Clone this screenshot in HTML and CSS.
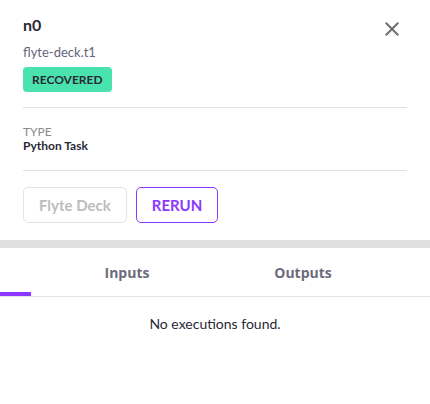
FILE: index.html
```html
<!DOCTYPE html>
<html>
<head>
<meta charset="utf-8">
<link rel="stylesheet" href="styles.css">
</head>
<body>
<div class="panel">
  <div class="header">
    <div class="title-row">
      <div class="titles">
        <div class="title">n0</div>
        <div class="subtitle">flyte-deck.t1</div>
      </div>
      <button class="close" aria-label="close">
        <svg viewBox="0 0 24 24" width="24" height="24"><path d="M19 6.41L17.59 5 12 10.59 6.41 5 5 6.41 10.59 12 5 17.59 6.41 19 12 13.41 17.59 19 19 17.59 13.41 12z" fill="#6e6e6e"/></svg>
      </button>
    </div>
    <div class="badge">RECOVERED</div>
    <div class="divider"></div>
    <div class="meta">
      <div class="meta-label">TYPE</div>
      <div class="meta-value">Python Task</div>
    </div>
    <div class="divider second"></div>
    <div class="actions">
      <button class="btn btn-disabled">Flyte Deck</button>
      <button class="btn btn-primary">RERUN</button>
    </div>
  </div>
  <div class="band"></div>
  <div class="tabs">
    <div class="tab">Inputs</div>
    <div class="tab">Outputs</div>
    <div class="indicator"></div>
  </div>
  <div class="empty">No executions found.</div>
</div>
</body>
</html>
```
FILE: styles.css
```css
* { box-sizing: border-box; }
html, body { margin: 0; padding: 0; background: #fff; }
body { font-family: Lato, "Liberation Sans", sans-serif; color: #292936; width: 430px; height: 404px; overflow: hidden; }
.header { padding: 13px 23px 0 23px; }
.title-row { display: flex; justify-content: space-between; align-items: flex-start; }
.title { font-size: 16px; font-weight: 700; line-height: 24px; color: #292936; }
.subtitle { margin-top: 6px; font-size: 13px; line-height: 18px; color: #636379; }
.close { margin: 4px 3px 0 0; padding: 0; border: 0; background: none; width: 24px; height: 24px; display: block; }
.close svg { display: block; }
.badge { display: inline-block; margin-top: 6px; height: 25px; padding: 0 9px; border-radius: 4px; background: #4ae3ae; color: #292936; font-size: 12px; font-weight: 700; line-height: 25px; }
.divider { height: 1px; background: #e2e2e2; margin-top: 15px; }
.divider.second { margin-top: 16px; }
.meta { margin-top: 18px; }
.meta-label { font-size: 12px; line-height: 12px; color: #8a8a8a; }
.meta-value { font-size: 12px; line-height: 16px; font-weight: 700; color: #292936; }
.actions { display: flex; gap: 9px; margin-top: 16px; }
.btn { height: 36px; padding: 0 15px; border-radius: 5px; background: #fff; font-family: Lato, "Liberation Sans", sans-serif; font-size: 15px; font-weight: 700; line-height: 34px; }
.btn-disabled { border: 1px solid #e4e4e4; color: #bdbdbd; }
.btn-primary { border: 1px solid #8b37ff; color: #8b37ff; }
.band { height: 8px; background: #e0e0e0; margin-top: 17px; }
.tabs { position: relative; display: flex; justify-content: center; border-bottom: 1px solid #e2e2e2; height: 49px; }
.tab { width: 176px; height: 48px; display: flex; align-items: center; justify-content: center; font-family: "Open Sans", "Liberation Sans", sans-serif; font-weight: 700; font-size: 14px; color: #6b6b7b; }
.indicator { position: absolute; left: 0; bottom: 0; width: 31px; height: 4px; background: #8b37ff; }
.empty { margin-top: 17px; text-align: center; font-size: 14px; line-height: 20px; color: #292936; }
```
